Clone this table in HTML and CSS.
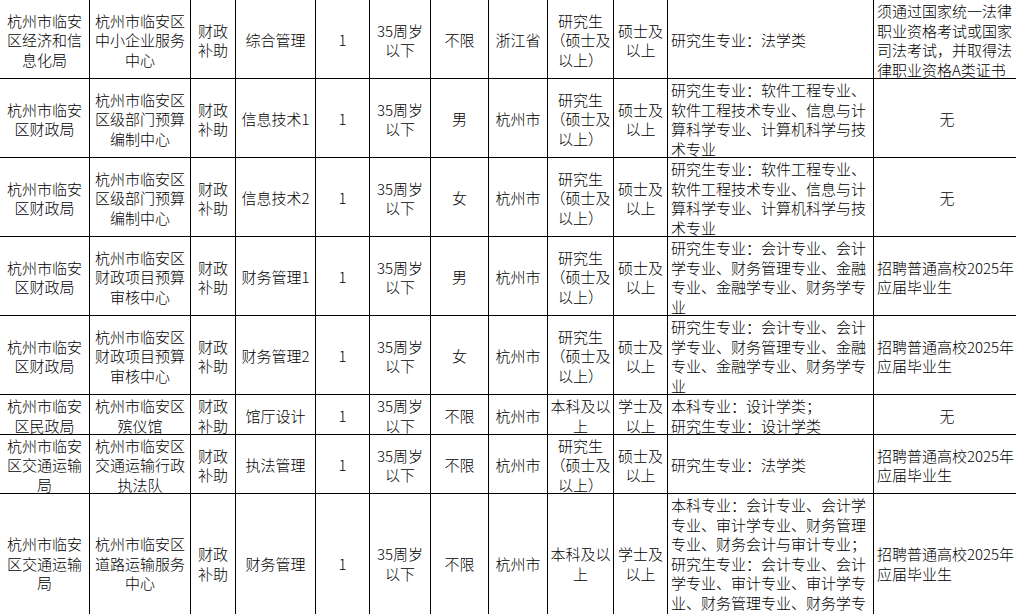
FILE: index.html
```html
<!DOCTYPE html>
<html lang="zh-CN">
<head>
<meta charset="utf-8">
<title>岗位表</title>
<link rel="stylesheet" href="styles.css">
</head>
<body>
<div class="sheet">
  <!-- row 1 -->
  <div class="cell">杭州市临安区经济和信息化局</div>
  <div class="cell">杭州市临安区中小企业服务中心</div>
  <div class="cell">财政补助</div>
  <div class="cell">综合管理</div>
  <div class="cell">1</div>
  <div class="cell">35周岁以下</div>
  <div class="cell">不限</div>
  <div class="cell">浙江省</div>
  <div class="cell">研究生（硕士及以上）</div>
  <div class="cell">硕士及以上</div>
  <div class="cell left">研究生专业：法学类</div>
  <div class="cell left last">须通过国家统一法律职业资格考试或国家司法考试，并取得法律职业资格A类证书</div>
  <!-- row 2 -->
  <div class="cell">杭州市临安区财政局</div>
  <div class="cell">杭州市临安区区级部门预算编制中心</div>
  <div class="cell">财政补助</div>
  <div class="cell">信息技术1</div>
  <div class="cell">1</div>
  <div class="cell">35周岁以下</div>
  <div class="cell">男</div>
  <div class="cell">杭州市</div>
  <div class="cell">研究生（硕士及以上）</div>
  <div class="cell">硕士及以上</div>
  <div class="cell left">研究生专业：软件工程专业、软件工程技术专业、信息与计算科学专业、计算机科学与技术专业</div>
  <div class="cell last">无</div>
  <!-- row 3 -->
  <div class="cell">杭州市临安区财政局</div>
  <div class="cell">杭州市临安区区级部门预算编制中心</div>
  <div class="cell">财政补助</div>
  <div class="cell">信息技术2</div>
  <div class="cell">1</div>
  <div class="cell">35周岁以下</div>
  <div class="cell">女</div>
  <div class="cell">杭州市</div>
  <div class="cell">研究生（硕士及以上）</div>
  <div class="cell">硕士及以上</div>
  <div class="cell left">研究生专业：软件工程专业、软件工程技术专业、信息与计算科学专业、计算机科学与技术专业</div>
  <div class="cell last">无</div>
  <!-- row 4 -->
  <div class="cell">杭州市临安区财政局</div>
  <div class="cell">杭州市临安区财政项目预算审核中心</div>
  <div class="cell">财政补助</div>
  <div class="cell">财务管理1</div>
  <div class="cell">1</div>
  <div class="cell">35周岁以下</div>
  <div class="cell">男</div>
  <div class="cell">杭州市</div>
  <div class="cell">研究生（硕士及以上）</div>
  <div class="cell">硕士及以上</div>
  <div class="cell left">研究生专业：会计专业、会计学专业、财务管理专业、金融专业、金融学专业、财务学专业</div>
  <div class="cell left last">招聘普通高校2025年应届毕业生</div>
  <!-- row 5 -->
  <div class="cell">杭州市临安区财政局</div>
  <div class="cell">杭州市临安区财政项目预算审核中心</div>
  <div class="cell">财政补助</div>
  <div class="cell">财务管理2</div>
  <div class="cell">1</div>
  <div class="cell">35周岁以下</div>
  <div class="cell">女</div>
  <div class="cell">杭州市</div>
  <div class="cell">研究生（硕士及以上）</div>
  <div class="cell">硕士及以上</div>
  <div class="cell left">研究生专业：会计专业、会计学专业、财务管理专业、金融专业、金融学专业、财务学专业</div>
  <div class="cell left last">招聘普通高校2025年应届毕业生</div>
  <!-- row 6 -->
  <div class="cell">杭州市临安区民政局</div>
  <div class="cell">杭州市临安区殡仪馆</div>
  <div class="cell">财政补助</div>
  <div class="cell">馆厅设计</div>
  <div class="cell">1</div>
  <div class="cell">35周岁以下</div>
  <div class="cell">不限</div>
  <div class="cell">杭州市</div>
  <div class="cell">本科及以上</div>
  <div class="cell">学士及以上</div>
  <div class="cell left">本科专业：设计学类；<br>研究生专业：设计学类</div>
  <div class="cell last">无</div>
  <!-- row 7 -->
  <div class="cell">杭州市临安区交通运输局</div>
  <div class="cell">杭州市临安区交通运输行政执法队</div>
  <div class="cell">财政补助</div>
  <div class="cell">执法管理</div>
  <div class="cell">1</div>
  <div class="cell">35周岁以下</div>
  <div class="cell">不限</div>
  <div class="cell">杭州市</div>
  <div class="cell">研究生（硕士及以上）</div>
  <div class="cell">硕士及以上</div>
  <div class="cell left">研究生专业：法学类</div>
  <div class="cell left last">招聘普通高校2025年应届毕业生</div>
  <!-- row 8 -->
  <div class="cell">杭州市临安区交通运输局</div>
  <div class="cell">杭州市临安区道路运输服务中心</div>
  <div class="cell">财政补助</div>
  <div class="cell">财务管理</div>
  <div class="cell">1</div>
  <div class="cell">35周岁以下</div>
  <div class="cell">不限</div>
  <div class="cell">杭州市</div>
  <div class="cell">本科及以上</div>
  <div class="cell">学士及以上</div>
  <div class="cell left">本科专业：会计专业、会计学专业、审计学专业、财务管理专业、财务会计与审计专业；<br>研究生专业：会计专业、会计学专业、审计专业、审计学专业、财务管理专业、财务学专业</div>
  <div class="cell left last">招聘普通高校2025年应届毕业生</div>
</div>
</body>
</html>
```

FILE: styles.css
```css
html, body {
  margin: 0;
  padding: 0;
  background: #ffffff;
}

body {
  width: 1016px;
  height: 614px;
  overflow: hidden;
  font-family: "Noto Sans CJK SC", "Liberation Sans", sans-serif;
  font-size: 15px;
  font-weight: 300;
  line-height: 19.5px;
  color: #000000;
}

.sheet {
  display: grid;
  grid-template-columns: 90px 101px 45px 80px 54px 61px 58px 59px 66px 54px 206px 145px;
  grid-template-rows: 79px 79px 79px 79px 79px 40px 59px 138px;
  width: 1043px;
}

.cell {
  box-sizing: border-box;
  display: flex;
  align-items: center;
  justify-content: center;
  text-align: center;
  padding: 2px 2px 0 2px;
  border-right: 1px solid #000000;
  border-bottom: 1px solid #000000;
}

.cell.left {
  justify-content: flex-start;
  text-align: left;
  padding-left: 3px;
}

.cell.last {
  padding-right: 0;
}
```
